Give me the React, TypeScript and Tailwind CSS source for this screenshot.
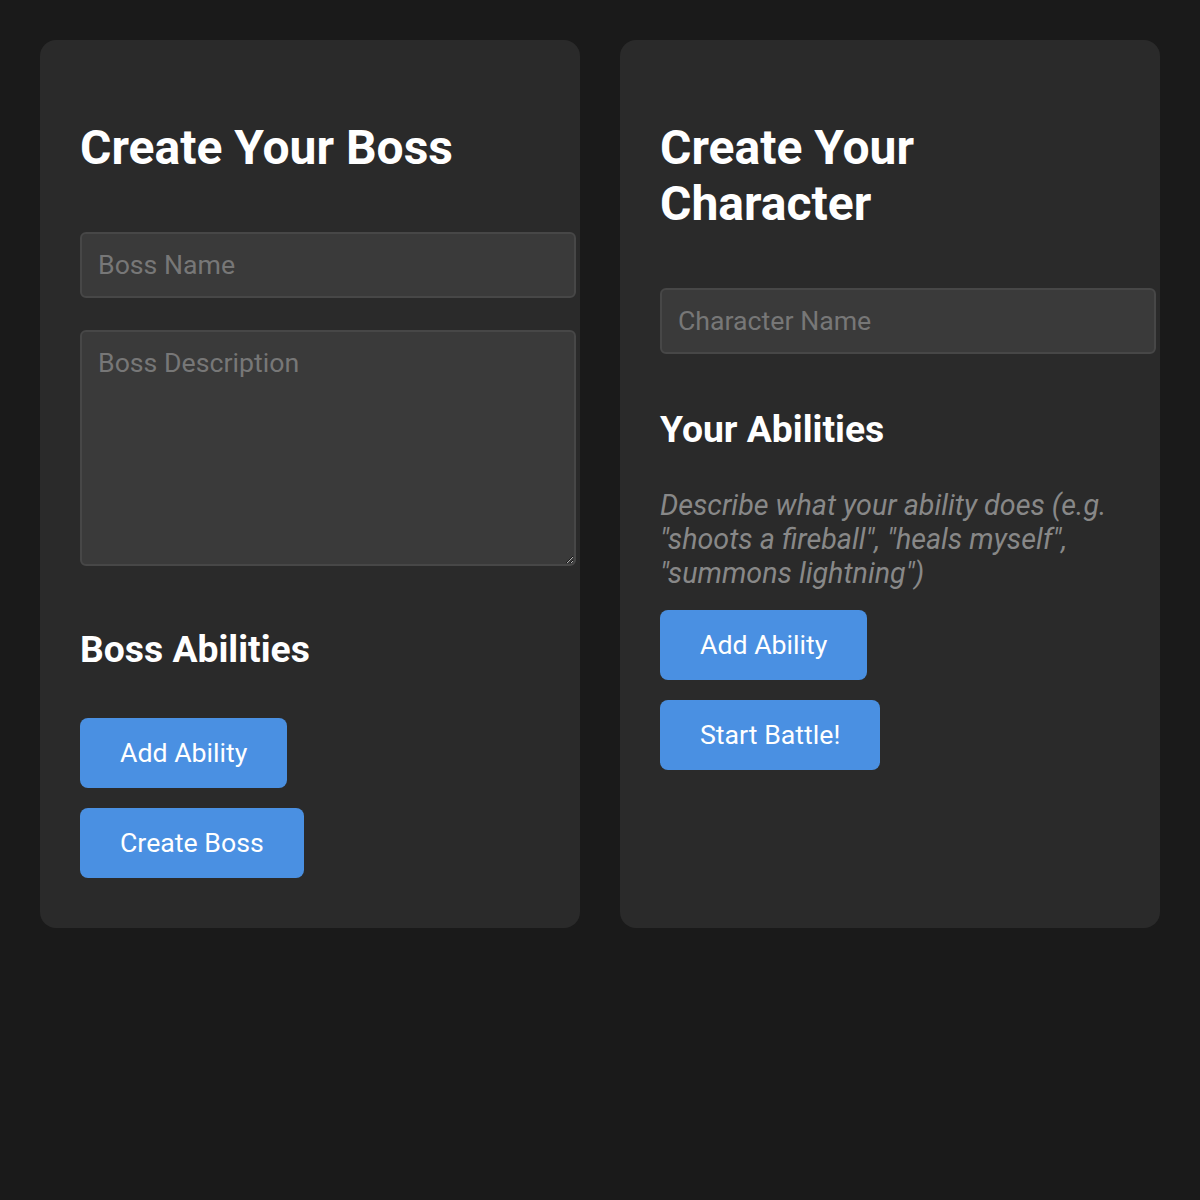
import React, { useState } from "react";

// Form panels for a small boss-battle game
export default function App() {
  const [bossName, setBossName] = useState("");
  const [bossDesc, setBossDesc] = useState("");
  const [charName, setCharName] = useState("");

  const inputCls =
    "block w-[496px] h-[66px] px-4 bg-[#3a3a3a] border-2 border-[#474747] rounded-md text-[26.7px] text-white placeholder-[#777777] outline-none";
  const buttonCls =
    "block h-[70px] px-10 bg-[#4a90e2] text-white text-[26.7px] rounded-lg";

  return (
    <div className="min-h-[1200px] bg-[#1a1a1a] p-10 font-['Roboto',sans-serif]">
      <div className="flex gap-10 items-stretch">
        {/* Boss panel */}
        <section className="w-[540px] bg-[#2a2a2a] rounded-2xl p-10">
          <h1 className="mt-10 text-[48px] leading-[56px] font-bold text-white">Create Your Boss</h1>
          <input
            value={bossName}
            onChange={(e) => setBossName(e.target.value)}
            placeholder="Boss Name"
            className={`${inputCls} mt-14`}
          />
          <textarea
            value={bossDesc}
            onChange={(e) => setBossDesc(e.target.value)}
            placeholder="Boss Description"
            className="block w-[496px] h-[236px] mt-8 px-4 pt-[15px] leading-[32px] bg-[#3a3a3a] border-2 border-[#474747] rounded-md text-[26.7px] text-white placeholder-[#777777] outline-none"
          />
          <h2 className="mt-[62px] text-[37.3px] leading-[42px] font-bold text-white">Boss Abilities</h2>
          <div className="mt-12 mb-[10px] flex flex-col items-start gap-5">
            <button className={buttonCls}>Add Ability</button>
            <button className={buttonCls}>Create Boss</button>
          </div>
        </section>

        {/* Character panel */}
        <section className="w-[540px] bg-[#2a2a2a] rounded-2xl p-10">
          <h1 className="mt-10 text-[48px] leading-[56px] font-bold text-white">
            Create Your
            <br />
            Character
          </h1>
          <input
            value={charName}
            onChange={(e) => setCharName(e.target.value)}
            placeholder="Character Name"
            className={`${inputCls} mt-14`}
          />
          <h2 className="mt-[54px] text-[37.3px] leading-[42px] font-bold text-white">Your Abilities</h2>
          <p className="mt-[38px] text-[28.7px] leading-[34px] italic text-[#888888]">
            Describe what your ability does (e.g. "shoots a fireball", "heals myself", "summons lightning")
          </p>
          <div className="mt-5 flex flex-col items-start gap-5">
            <button className={buttonCls}>Add Ability</button>
            <button className={buttonCls}>Start Battle!</button>
          </div>
        </section>
      </div>
    </div>
  );
}
